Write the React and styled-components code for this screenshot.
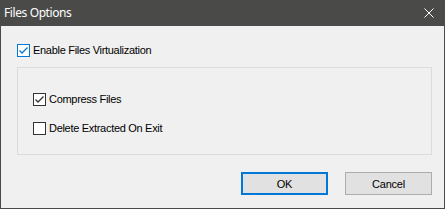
import React from "react";
import styled, { createGlobalStyle } from "styled-components";

const Global = createGlobalStyle`
  html, body { margin: 0; padding: 0; background: #f0f0f0; }
  body { font-family: "Liberation Sans", Arial, sans-serif; font-size: 11px; color: #000; }
`;

const Window = styled.div`
  width: 445px;
  height: 209px;
  box-sizing: border-box;
  border: 1px solid #4a4a48;
  border-top: none;
  background: #f0f0f0;
  display: flex;
  flex-direction: column;
`;

const TitleBar = styled.div`
  height: 26px;
  margin: 0 -1px;
  background: #4a4a48;
  color: #fff;
  display: flex;
  align-items: center;
  justify-content: space-between;
  padding: 0 11px 0 4px;
  font-family: "Noto Sans", "Open Sans", sans-serif;
  font-size: 12px;
  letter-spacing: -0.4px;
`;

const Title = styled.span`
  margin-top: -1px;
`;

const Close = styled.svg`
  width: 10px;
  height: 10px;
`;

const Content = styled.div`
  flex: 1;
  display: flex;
  flex-direction: column;
  padding: 18px 12px 0 16px;
`;

const Row = styled.label`
  display: flex;
  align-items: center;
  height: 13px;
  gap: 3px;
  margin-top: ${(p) => p.$mt || 0}px;
`;

const Box = styled.span`
  width: 13px;
  height: 13px;
  box-sizing: border-box;
  border: 1px solid ${(p) => (p.$focus ? "#0078d7" : "#333")};
  background: #fff;
  display: flex;
  align-items: center;
  justify-content: center;
  flex: none;
`;

const Label = styled.span`
  line-height: 13px;
  letter-spacing: -0.3px;
`;

const Group = styled.div`
  margin-top: 10px;
  height: 88px;
  box-sizing: border-box;
  border: 1px solid #dcdcdc;
  padding: 25px 0 0 15px;
  display: flex;
  flex-direction: column;
`;

const Buttons = styled.div`
  display: flex;
  justify-content: flex-end;
  gap: 17px;
  margin-top: 17px;
`;

const Button = styled.button`
  width: 87px;
  height: 23px;
  box-sizing: border-box;
  background: #e1e1e1;
  border: ${(p) => (p.$default ? "2px solid #0078d7" : "1px solid #adadad")};
  font-family: "Liberation Sans", Arial, sans-serif;
  font-size: 11px;
  letter-spacing: -0.2px;
  color: #000;
  padding: 0;
`;

const Check = ({ color }) => (
  <svg width="11" height="11" viewBox="0 0 11 11">
    <path d="M1.5 5.5 L4 8 L9.5 2.5" fill="none" stroke={color} strokeWidth="1.3" />
  </svg>
);

const Checkbox = ({ checked, focus, label, mt }) => (
  <Row $mt={mt}>
    <Box $focus={focus}>{checked && <Check color={focus ? "#0078d7" : "#333"} />}</Box>
    <Label>{label}</Label>
  </Row>
);

export default function App() {
  return (
    <>
      <Global />
      <Window>
        <TitleBar>
          <Title>Files Options</Title>
          <Close viewBox="0 0 10 10">
            <path d="M0.5 0.5 L9.5 9.5 M9.5 0.5 L0.5 9.5" stroke="#fff" strokeWidth="1" />
          </Close>
        </TitleBar>
        <Content>
          <Checkbox checked focus label="Enable Files Virtualization" />
          <Group>
            <Checkbox checked label="Compress Files" />
            <Checkbox label="Delete Extracted On Exit" mt={16} />
          </Group>
          <Buttons>
            <Button $default>OK</Button>
            <Button>Cancel</Button>
          </Buttons>
        </Content>
      </Window>
    </>
  );
}
